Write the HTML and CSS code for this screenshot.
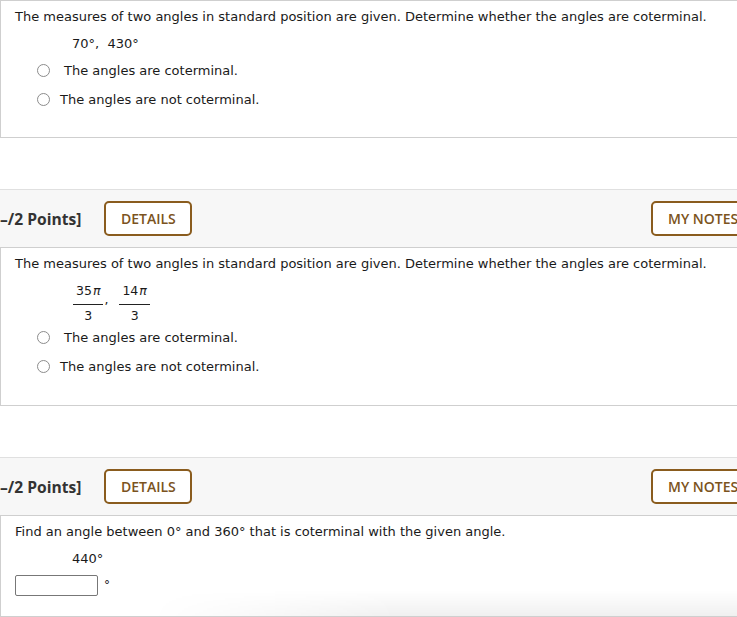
FILE: index.html
```html
<!DOCTYPE html>
<html>
<head>
<meta charset="utf-8">
<link rel="stylesheet" href="styles.css">
</head>
<body>
<div class="page">
  <div class="qbox q1">
    <p class="prompt">The measures of two angles in standard position are given. Determine whether the angles are coterminal.</p>
    <p class="given">70°,&nbsp; 430°</p>
    <div class="choice"><span class="radio"></span><span class="label pad">The angles are coterminal.</span></div>
    <div class="choice"><span class="radio"></span><span class="label">The angles are not coterminal.</span></div>
  </div>
  <div class="spacer"></div>
  <div class="header">
    <span class="points">–/2 Points]</span>
    <span class="btn">DETAILS</span>
    <span class="grow"></span>
    <span class="btn notes">MY NOTES</span>
  </div>
  <div class="qbox q2">
    <p class="prompt">The measures of two angles in standard position are given. Determine whether the angles are coterminal.</p>
    <div class="fracs">
      <span class="frac"><span class="num">35<i>π</i></span><span class="den">3</span></span><span class="comma">,</span>
      <span class="frac"><span class="num">14<i>π</i></span><span class="den">3</span></span>
    </div>
    <div class="choice"><span class="radio"></span><span class="label pad">The angles are coterminal.</span></div>
    <div class="choice"><span class="radio"></span><span class="label">The angles are not coterminal.</span></div>
  </div>
  <div class="spacer"></div>
  <div class="header">
    <span class="points">–/2 Points]</span>
    <span class="btn">DETAILS</span>
    <span class="grow"></span>
    <span class="btn notes">MY NOTES</span>
  </div>
  <div class="qbox q3">
    <p class="prompt">Find an angle between 0° and 360° that is coterminal with the given angle.</p>
    <p class="given g3">440°</p>
    <div class="answer"><span class="input"></span><span class="deg">°</span></div>
    <div class="shade"></div>
  </div>
</div>
</body>
</html>
```
FILE: styles.css
```css
html, body {
  margin: 0;
  padding: 0;
  background: #fff;
  overflow: hidden;
}
.page {
  width: 770px;
  font-family: "DejaVu Sans", Verdana, sans-serif;
  font-size: 13px;
  color: #1a1a1a;
}
.qbox {
  border: 1px solid #cfcfcf;
  border-right: none;
  box-sizing: border-box;
  padding: 7px 0 0 14px;
  position: relative;
  background: #fff;
  overflow: hidden;
}
.q1 { height: 138px; }
.q2 { height: 159px; }
.q3 { height: 102px; }
.prompt {
  margin: 0;
  line-height: 17px;
}
.given {
  margin: 10px 0 0 57px;
  line-height: 17px;
}
.g3 { margin-top: 10px; }
.choice {
  display: flex;
  align-items: center;
  height: 29px;
  margin-left: 22px;
}
.q1 .given + .choice { margin-top: 4px; }
.radio {
  width: 11px;
  height: 11px;
  border: 1px solid #8c8c8c;
  border-radius: 50%;
  background: #fff;
  box-sizing: content-box;
}
.label { margin-left: 10px; }
.label.pad { margin-left: 14px; }
.fracs {
  display: flex;
  align-items: flex-start;
  margin: 11px 0 0 58px;
  font-size: 12.5px;
}
.frac {
  display: inline-flex;
  flex-direction: column;
  align-items: stretch;
  text-align: center;
}
.num {
  padding: 0 3px 5px;
  border-bottom: 1px solid #222;
  line-height: 16px;
}
.den {
  line-height: 14px;
  padding-top: 4px;
}
.num i { font-family: "DejaVu Sans", sans-serif; font-style: italic; margin-left: 1px; }
.comma {
  margin: 10px 11px 0 1px;
  line-height: 14px;
}
.spacer { height: 51px; }
.header {
  height: 58px;
  box-sizing: border-box;
  background: #f7f7f7;
  border-top: 1px solid #e0e0e0;
  display: flex;
  align-items: center;
  font-family: "Open Sans", sans-serif;
  font-weight: 700;
  font-size: 14px;
}
.points {
  color: #333;
  margin-right: 23px;
  font-size: 15.6px;
}
.btn {
  box-sizing: border-box;
  width: 88px;
  height: 35px;
  border: 2px solid #8a5c1e;
  border-radius: 5px;
  color: #7b5320;
  display: flex;
  align-items: center;
  justify-content: center;
  background: #fff;
  font-weight: 600;
}
.notes {
  width: 100px;
  justify-content: flex-start;
  padding-left: 15px;
  margin-right: 19px;
}
.grow { flex: 1; }
.answer {
  display: flex;
  align-items: center;
  margin-top: 8px;
}
.input {
  width: 83px;
  height: 21px;
  box-sizing: border-box;
  border: 1px solid #777;
  border-radius: 2px;
  background: #fff;
}
.deg {
  margin-left: 6px;
  font-size: 12px;
  margin-top: -2px;
}
.shade {
  position: absolute;
  left: 150px;
  right: 0;
  bottom: 0;
  height: 26px;
  background: linear-gradient(to bottom, rgba(0,0,0,0), rgba(0,0,0,0.06));
  -webkit-mask-image: linear-gradient(to right, transparent, #000 40%);
  mask-image: linear-gradient(to right, transparent, #000 40%);
  pointer-events: none;
}
```
